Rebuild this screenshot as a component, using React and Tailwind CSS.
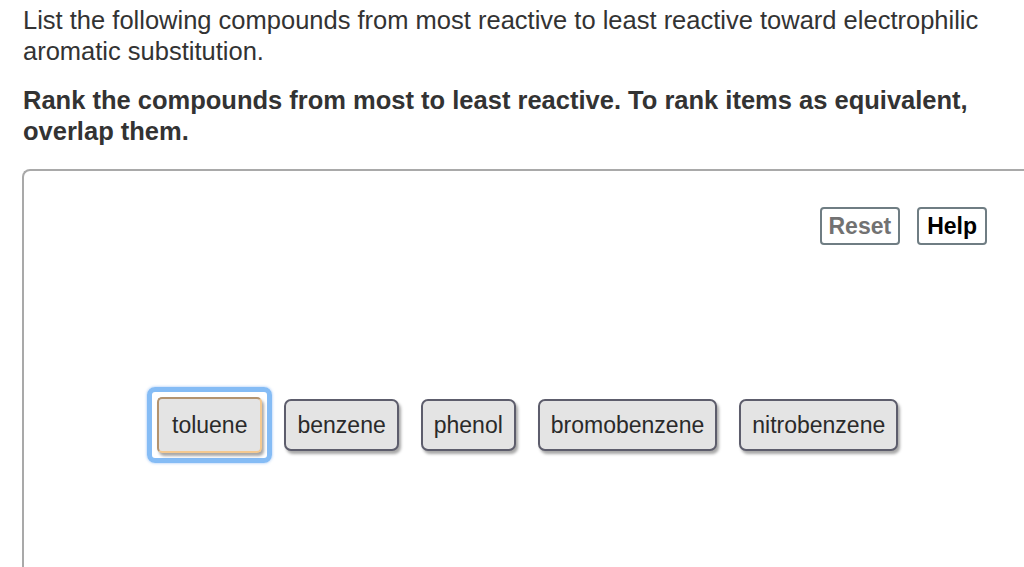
import React from "react";

const items = ["toluene", "benzene", "phenol", "bromobenzene", "nitrobenzene"];

const Chip = ({ label, selected }) => {
  if (selected) {
    return (
      <div className="relative">
        <div className="absolute -inset-[10px] rounded-[8px] border-[5px] border-[#85bcf5] shadow-[0_0_3px_rgba(80,150,240,0.6)]" />
        <div className="relative flex h-[56px] items-center rounded-[5px] border-2 border-[#f4c990] border-t-[#b3936f] border-l-[#b3936f] bg-[#e4e4e4] px-[13px] text-[23px] text-[#2a2a2a] shadow-[2px_3px_3px_rgba(0,0,0,0.35)]">
          {label}
        </div>
      </div>
    );
  }
  return (
    <div className="flex h-[52px] items-center rounded-[7px] border-2 border-[#5d5d6c] bg-[#e4e4e4] px-[11px] text-[23px] text-[#2a2a2a] shadow-[2px_3px_3px_rgba(0,0,0,0.35)]">
      {label}
    </div>
  );
};

export default function App() {
  return (
    <div className="h-[567px] w-[1024px] overflow-hidden bg-white font-['Liberation_Sans',Arial,sans-serif] text-[#333]">
      <div className="w-[1015px] px-[23px] pt-[5px]">
        <p className="text-[25.5px] leading-[31px]">
          List the following compounds from most reactive to least reactive toward electrophilic aromatic substitution.
        </p>
        <p className="mt-[18px] text-[25.5px] font-bold leading-[31px]">
          Rank the compounds from most to least reactive. To rank items as equivalent, overlap them.
        </p>
      </div>

      <div className="ml-[22px] mt-[22px] h-[420px] w-[1020px] rounded-tl-[8px] border-l-2 border-t-2 border-[#a9a9a9]">
        <div className="flex justify-end gap-[17px] pr-[55px] pt-[36px]">
          <button className="h-[38px] rounded-[4px] border-2 border-[#6f7d83] bg-white px-[7px] text-[23px] font-bold text-[#727272]">
            Reset
          </button>
          <button className="h-[38px] rounded-[4px] border-2 border-[#6f7d83] bg-white px-[8px] text-[23px] font-bold text-black">
            Help
          </button>
        </div>
        <div className="ml-[133px] mt-[152px] flex items-center gap-[22px]">
          {items.map((it, i) => (
            <Chip key={it} label={it} selected={i === 0} />
          ))}
        </div>
      </div>
    </div>
  );
}
